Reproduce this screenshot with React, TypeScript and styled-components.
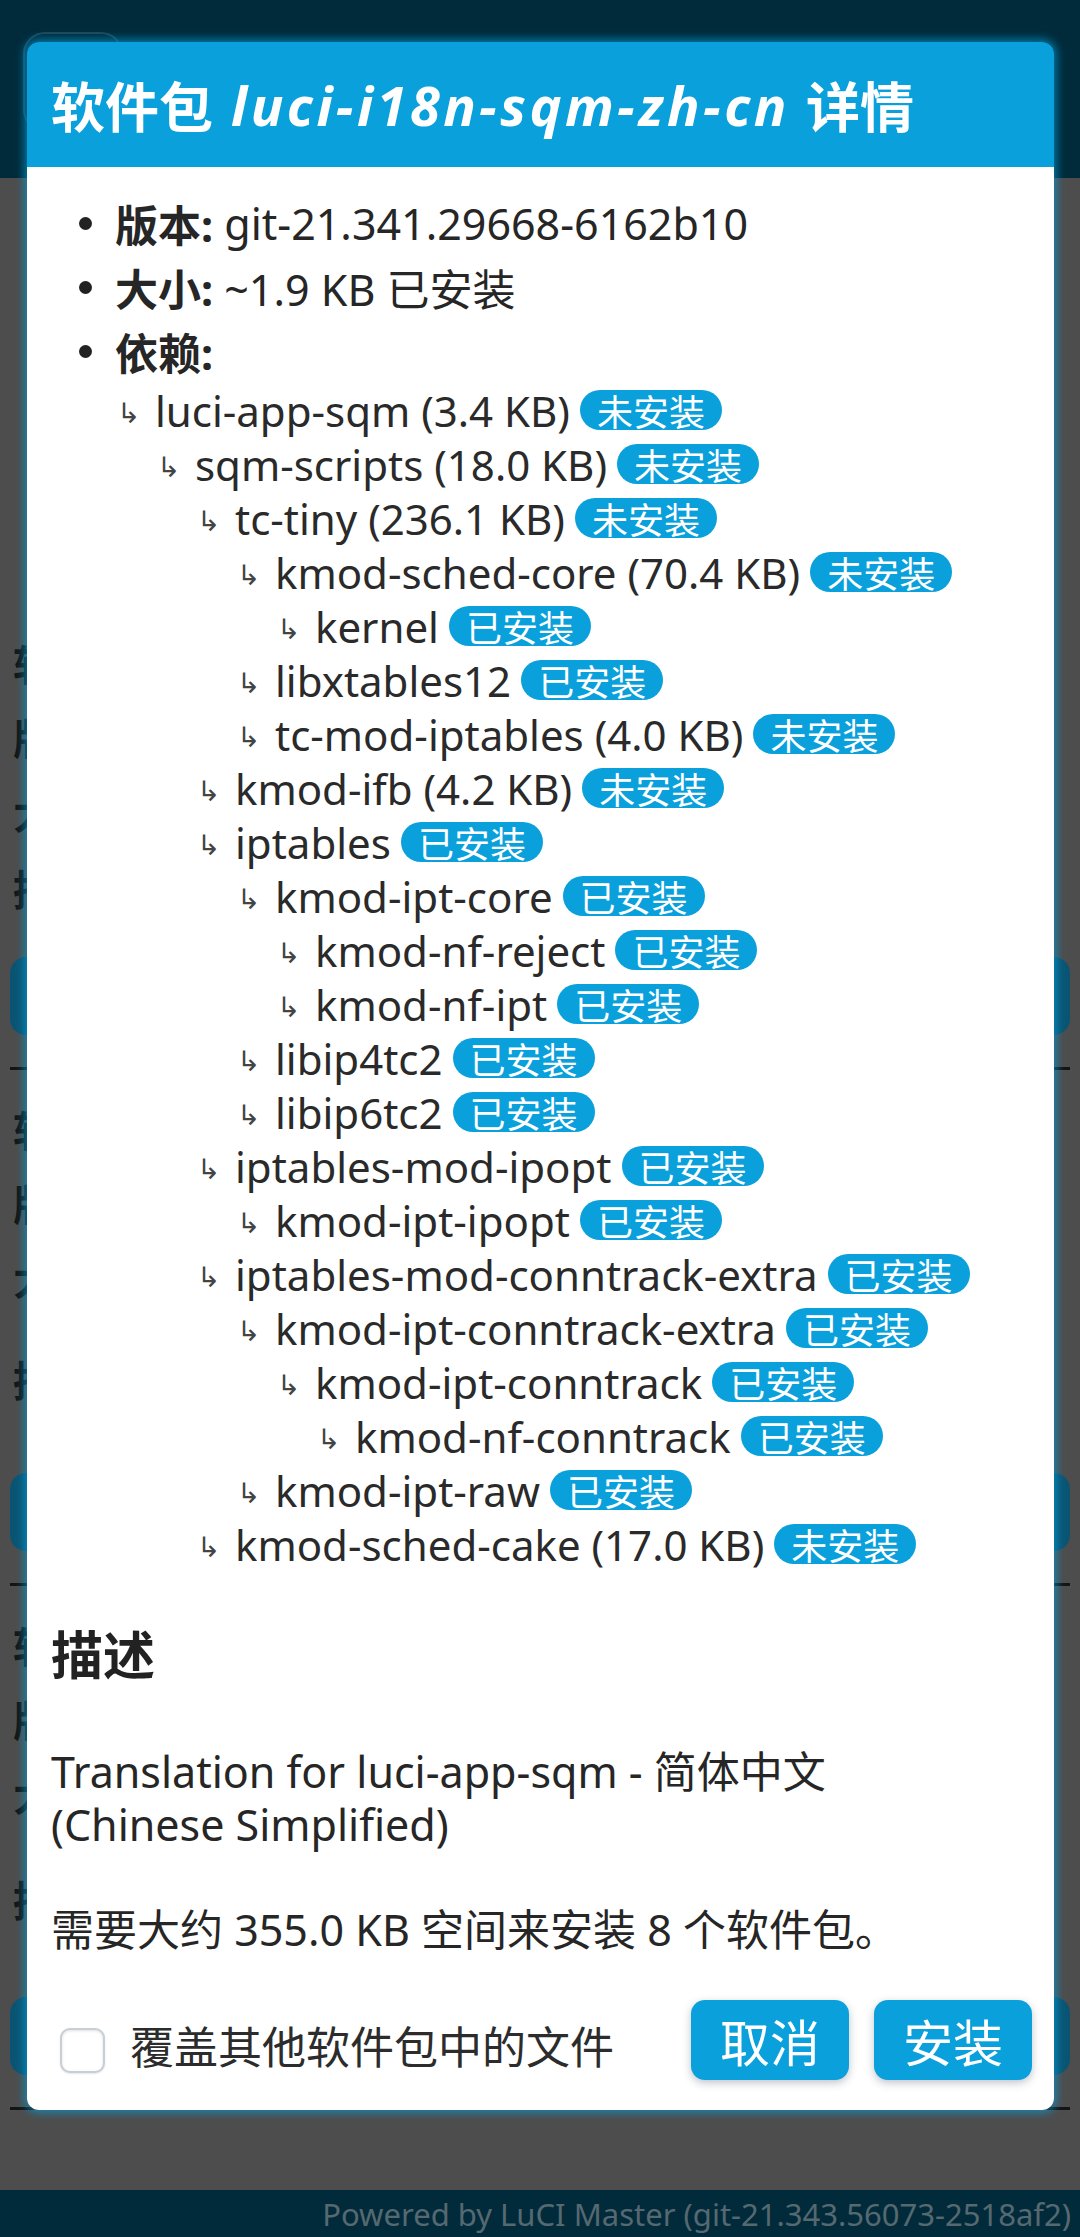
import React from "react";
import styled, { createGlobalStyle } from "styled-components";

const GlobalStyle = createGlobalStyle`
  html, body { margin: 0; padding: 0; }
  body {
    font-family: "Noto Sans", "Noto Sans CJK SC", sans-serif;
    background: #4d4d4d;
  }
  * { box-sizing: border-box; }
`;

const Page = styled.div`
  position: relative;
  width: 1080px;
  height: 2237px;
  display: flex;
  flex-direction: column;
  overflow: hidden;
`;

const TopBar = styled.header`
  flex: none;
  height: 178px;
  background: #012b3b;
  padding: 32px 23px;
`;

const MenuBox = styled.div`
  width: 100px;
  height: 100px;
  border-radius: 22px;
  border: 2px solid rgba(130, 175, 195, 0.22);
`;

const Main = styled.main`
  flex: 1;
  background: #4d4d4d;
  padding: 426px 10px 0;
`;

const Card = styled.section`
  display: flex;
  flex-direction: column;
  padding-top: 21px;
  border-bottom: 3px solid #141414;
`;

const Field = styled.div<{ $h: number }>`
  height: ${(p) => p.$h}px;
  display: flex;
  align-items: center;
  padding-left: 3px;
  font-size: 42px;
  font-weight: 700;
  color: #151515;
  white-space: nowrap;
`;

const CardButton = styled.div`
  margin: 30px 0 32px;
  height: 78px;
  border-radius: 16px;
  background: #0a5473;
`;

const BottomBar = styled.footer`
  flex: none;
  height: 47px;
  background: #012b3b;
  display: flex;
  justify-content: flex-end;
  align-items: center;
  padding-right: 9px;
  font-size: 31px;
  color: #566870;
`;

const Dialog = styled.div`
  position: absolute;
  top: 42px;
  left: 27px;
  right: 26px;
  border-radius: 12px;
  box-shadow: 0 0 9px 3px rgba(0, 160, 220, 0.65);
`;

const DialogHead = styled.h4`
  margin: 0;
  height: 125px;
  display: flex;
  align-items: center;
  padding: 0 24px;
  background: #0aa0dc;
  color: #fff;
  font-size: 54px;
  font-weight: 700;
  white-space: pre;
  border-radius: 12px 12px 0 0;

  em {
    font-style: italic;
    letter-spacing: 3.5px;
    margin: 0 2px 0 4px;
  }
`;

const DialogBody = styled.div`
  background: #fff;
  color: #262626;
  padding: 24px 22px 30px 24px;
  border-radius: 0 0 12px 12px;
`;

const InfoList = styled.ul`
  margin: 0;
  padding: 0;
  list-style: none;
`;

const InfoRow = styled.div`
  display: flex;
  align-items: center;
  height: 64px;
  font-size: 43px;
  white-space: pre;

  strong {
    font-weight: 700;
  }
`;

const Bullet = styled.span`
  flex: none;
  width: 13px;
  height: 13px;
  border-radius: 50%;
  background: #222;
  margin: 0 23px 0 28px;
`;

const Tree = styled.ul`
  margin: 0;
  padding: 0;
  list-style: none;
`;

const TreeRow = styled.li<{ $depth: number }>`
  display: flex;
  align-items: center;
  height: 54px;
  padding-left: ${(p) => 66 + (p.$depth - 1) * 40}px;
  font-size: 42px;
  color: #2a2a2a;
  white-space: pre;
`;

const Arrow = styled.span`
  flex: none;
  width: 38px;
  font-family: "DejaVu Sans", sans-serif;
  font-size: 28px;
  color: #444;
  padding-top: 6px;
`;

const Badge = styled.span`
  display: inline-flex;
  align-items: center;
  height: 40px;
  margin-left: 10px;
  padding: 0 17px;
  border-radius: 20px;
  background: #0aa0dc;
  color: #fff;
  font-size: 36px;
`;

const SectionTitle = styled.h3`
  margin: 53px 0 0;
  font-size: 52px;
  font-weight: 700;
  line-height: 62px;
  color: #222;
`;

const Para = styled.p<{ $gap: number }>`
  margin: ${(p) => p.$gap}px 0 0;
  font-size: 43px;
  line-height: 53px;
  color: #262626;
`;

const ActionRow = styled.div`
  margin-top: 44px;
  display: flex;
  align-items: center;
  justify-content: space-between;
`;

const CheckLabel = styled.label`
  display: flex;
  align-items: center;
  gap: 25px;
  margin: 10px 0 0 9px;
  font-size: 44px;
  color: #2c2c2c;
`;

const CheckBox = styled.input`
  appearance: none;
  margin: 10px 0 0;
  width: 45px;
  height: 45px;
  border: 2px solid #c6cfd6;
  border-radius: 10px;
  background: #fff;
  box-shadow: inset 0 1px 3px rgba(0, 0, 0, 0.12), 0 1px 2px rgba(0, 0, 0, 0.1);
`;

const Buttons = styled.div`
  display: flex;
  gap: 25px;
`;

const ActionButton = styled.button`
  width: 158px;
  height: 80px;
  border: none;
  border-radius: 14px;
  background: #0aa0dc;
  color: #fff;
  font-family: inherit;
  font-size: 50px;
  box-shadow: 0 3px 8px rgba(40, 60, 90, 0.3);
  padding: 0;
`;

type Dep = { d: number; name: string; installed: boolean };

const deps: Dep[] = [
  { d: 1, name: "luci-app-sqm (3.4 KB)", installed: false },
  { d: 2, name: "sqm-scripts (18.0 KB)", installed: false },
  { d: 3, name: "tc-tiny (236.1 KB)", installed: false },
  { d: 4, name: "kmod-sched-core (70.4 KB)", installed: false },
  { d: 5, name: "kernel", installed: true },
  { d: 4, name: "libxtables12", installed: true },
  { d: 4, name: "tc-mod-iptables (4.0 KB)", installed: false },
  { d: 3, name: "kmod-ifb (4.2 KB)", installed: false },
  { d: 3, name: "iptables", installed: true },
  { d: 4, name: "kmod-ipt-core", installed: true },
  { d: 5, name: "kmod-nf-reject", installed: true },
  { d: 5, name: "kmod-nf-ipt", installed: true },
  { d: 4, name: "libip4tc2", installed: true },
  { d: 4, name: "libip6tc2", installed: true },
  { d: 3, name: "iptables-mod-ipopt", installed: true },
  { d: 4, name: "kmod-ipt-ipopt", installed: true },
  { d: 3, name: "iptables-mod-conntrack-extra", installed: true },
  { d: 4, name: "kmod-ipt-conntrack-extra", installed: true },
  { d: 5, name: "kmod-ipt-conntrack", installed: true },
  { d: 6, name: "kmod-nf-conntrack", installed: true },
  { d: 4, name: "kmod-ipt-raw", installed: true },
  { d: 3, name: "kmod-sched-cake (17.0 KB)", installed: false },
];

const cards = [80, 130, 138];

export default function App() {
  return (
    <>
      <GlobalStyle />
      <Page>
        <TopBar>
          <MenuBox />
        </TopBar>
        <Main>
          {cards.map((h, i) => (
            <Card key={i}>
              <Field $h={74}>软件包名称</Field>
              <Field $h={74}>版本</Field>
              <Field $h={74}>大小</Field>
              <Field $h={h}>描述</Field>
              <CardButton />
            </Card>
          ))}
        </Main>
        <BottomBar>Powered by LuCI Master (git-21.343.56073-2518af2)</BottomBar>

        <Dialog>
          <DialogHead>
            软件包 <em>luci-i18n-sqm-zh-cn</em> 详情
          </DialogHead>
          <DialogBody>
            <InfoList>
              <li>
                <InfoRow>
                  <Bullet />
                  <strong>版本:</strong> git-21.341.29668-6162b10
                </InfoRow>
              </li>
              <li>
                <InfoRow>
                  <Bullet />
                  <strong>大小:</strong> ~1.9 KB 已安装
                </InfoRow>
              </li>
              <li>
                <InfoRow>
                  <Bullet />
                  <strong>依赖:</strong>
                </InfoRow>
                <Tree>
                  {deps.map((dep, i) => (
                    <TreeRow key={i} $depth={dep.d}>
                      <Arrow>↳</Arrow>
                      {dep.name}
                      <Badge>{dep.installed ? "已安装" : "未安装"}</Badge>
                    </TreeRow>
                  ))}
                </Tree>
              </li>
            </InfoList>
            <SectionTitle>描述</SectionTitle>
            <Para $gap={59}>
              Translation for luci-app-sqm - 简体中文
              <br />
              (Chinese Simplified)
            </Para>
            <Para $gap={52}>需要大约 355.0 KB 空间来安装 8 个软件包。</Para>
            <ActionRow>
              <CheckLabel>
                <CheckBox type="checkbox" />
                覆盖其他软件包中的文件
              </CheckLabel>
              <Buttons>
                <ActionButton>取消</ActionButton>
                <ActionButton>安装</ActionButton>
              </Buttons>
            </ActionRow>
          </DialogBody>
        </Dialog>
      </Page>
    </>
  );
}
